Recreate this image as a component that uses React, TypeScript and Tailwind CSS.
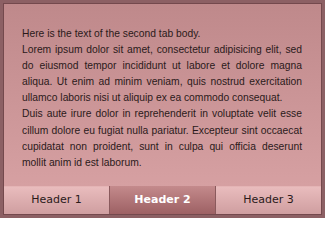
import React from "react";

export default function App() {
  const tabs = ["Header 1", "Header 2", "Header 3"];
  return (
    <div className="w-[325px] h-[218px] bg-[#8c6064] p-[3px] box-border">
      <div className="w-full h-full border border-[#74494d] flex flex-col box-border">
        <div
          className="flex-1 bg-gradient-to-b from-[#bf898b] to-[#d6a0a2] pl-[18px] pr-[19px] pt-[22px] text-[10.3px] leading-[16.1px] text-[#2b1a1a] text-justify"
          style={{ fontFamily: '"Liberation Sans", Arial, sans-serif' }}
        >
          <p>Here is the text of the second tab body.</p>
          <p>
            Lorem ipsum dolor sit amet, consectetur adipisicing elit, sed do eiusmod tempor incididunt ut labore et dolore magna aliqua. Ut enim ad minim veniam, quis nostrud exercitation ullamco laboris nisi ut aliquip ex ea commodo consequat.
          </p>
          <p>
            Duis aute irure dolor in reprehenderit in voluptate velit esse cillum dolore eu fugiat nulla pariatur. Excepteur sint occaecat cupidatat non proident, sunt in culpa qui officia deserunt mollit anim id est laborum.
          </p>
        </div>
        <div
          className="flex h-[28px] text-[11px]"
          style={{ fontFamily: '"DejaVu Sans", Verdana, sans-serif' }}
        >
          {tabs.map((t, i) =>
            i === 1 ? (
              <div
                key={t}
                className="flex-1 flex items-center justify-center bg-gradient-to-b from-[#c48a8c] to-[#9d6164] border-l border-[#8a5a5d] border-r text-white font-bold"
              >
                {t}
              </div>
            ) : (
              <div
                key={t}
                className="flex-1 flex items-center justify-center bg-gradient-to-b from-[#e9bcbd] to-[#cf9ea0] border-t border-[#e4b4b5] text-[#2b1a1a]"
              >
                {t}
              </div>
            )
          )}
        </div>
      </div>
    </div>
  );
}
